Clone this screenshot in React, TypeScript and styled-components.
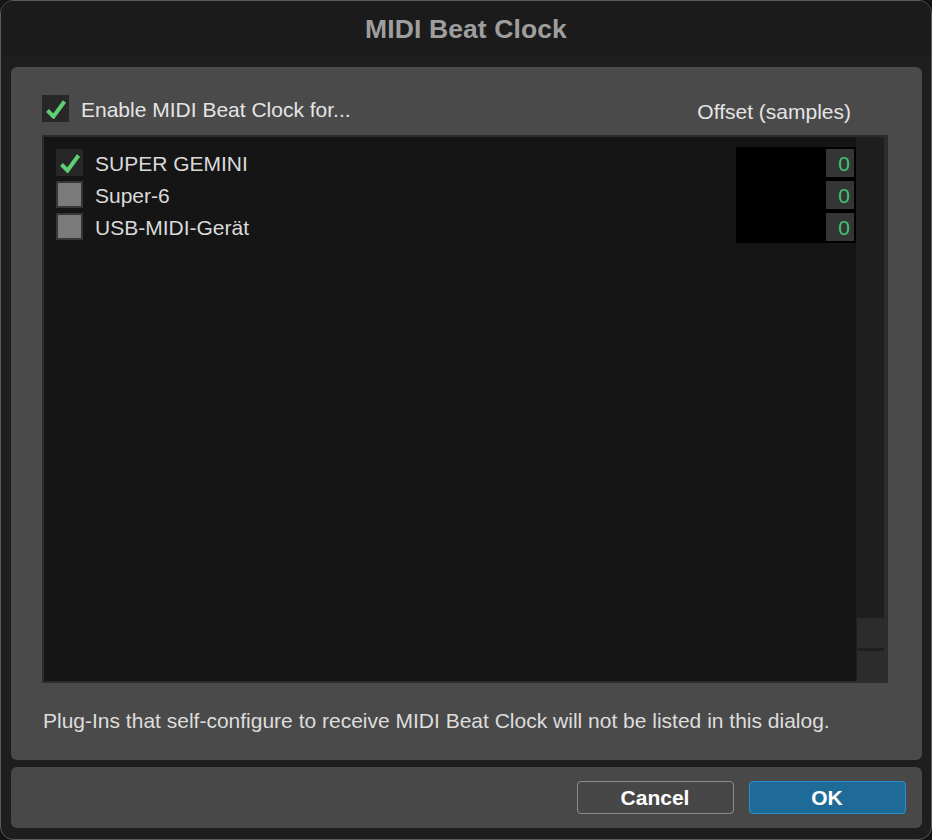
import React from "react";
import styled, { createGlobalStyle } from "styled-components";

const Global = createGlobalStyle`
  html, body { margin: 0; padding: 0; background: #161616; }
  body { font-family: "Liberation Sans", Arial, sans-serif; }
  * { box-sizing: border-box; }
`;

const Window = styled.div`
  width: 932px;
  height: 840px;
  background: #1e1e1e;
  border: 1.5px solid #5a5a5a;
  border-radius: 13px;
  box-shadow: 0 0 0 1px #0c0c0c;
  display: flex;
  flex-direction: column;
  overflow: hidden;
`;

const TitleBar = styled.div`
  height: 56px;
  flex: none;
  background: #1b1b1b;
  display: flex;
  align-items: center;
  justify-content: center;
`;

const Title = styled.h1`
  margin: 0;
  font-size: 26.5px;
  font-weight: 700;
  color: #9e9e9e;
  letter-spacing: 0.1px;
`;

const Body = styled.div`
  flex: 1;
  display: flex;
  flex-direction: column;
  gap: 7px;
  padding: 9.5px 9.5px 10px 9.5px;
`;

const Panel = styled.section`
  height: 693.5px;
  background: #4a4a4a;
  border-radius: 6px;
  padding: 28.5px 0 0 31.5px;
  display: flex;
  flex-direction: column;
`;

const HeaderRow = styled.div`
  width: 846px;
  height: 27px;
  display: flex;
  align-items: center;
`;

const HeaderLabel = styled.span`
  margin-left: 12px;
  padding-top: 2px;
  font-size: 21px;
  color: #e4e4e4;
  flex: 1;
`;

const OffsetLabel = styled.span`
  font-size: 21px;
  color: #e4e4e4;
  margin-right: 37px;
  margin-top: 7px;
`;

const CheckBox = styled.span<{ $checked?: boolean }>`
  width: 27px;
  height: 27px;
  flex: none;
  display: flex;
  align-items: center;
  justify-content: center;
  background: ${(p) => (p.$checked ? "#272727" : "#7a7a7a")};
  border: ${(p) => (p.$checked ? "none" : "2px solid #363636")};
`;

const ListBox = styled.div`
  margin-top: 13px;
  width: 846px;
  height: 548px;
  border: 2px solid #2c2c2c;
  background: #151515;
  display: grid;
  grid-template-columns: 1fr 120px 30px;
`;

const Names = styled.div`
  padding: 12px 0 0 12px;
  display: flex;
  flex-direction: column;
`;

const Row = styled.div`
  height: 32px;
  display: flex;
  align-items: flex-start;
  gap: 12px;
`;

const RowLabel = styled.span`
  font-size: 21px;
  line-height: 27px;
  padding-top: 1px;
  color: #dadada;
`;

const OffsetCol = styled.div`
  align-self: start;
  margin-top: 10px;
  background: #000;
  padding: 2px;
  display: flex;
  flex-direction: column;
  align-items: flex-end;
  gap: 4px;
`;

const OffsetCell = styled.span`
  width: 28px;
  height: 28px;
  background: #353535;
  color: #3ec870;
  font-size: 21px;
  line-height: 29px;
  text-align: right;
  padding-right: 4px;
`;

const ScrollTrack = styled.div`
  background: #1f1f1f;
  border-right: 2px solid #2e2e2e;
  display: flex;
  flex-direction: column;
  justify-content: flex-end;
  gap: 3px;
  padding: 0 0 0 1px;
`;

const ScrollButton = styled.div`
  height: 30px;
  background: #2c2c2c;
`;

const Note = styled.p`
  margin: 26px 0 0 1px;
  font-size: 21px;
  color: #dddddd;
`;

const Footer = styled.footer`
  height: 61px;
  background: #484848;
  border-radius: 6px;
  display: flex;
  align-items: center;
  justify-content: flex-end;
  gap: 15px;
  padding-right: 16px;
`;

const Button = styled.button<{ $primary?: boolean }>`
  width: 157px;
  height: 33px;
  border-radius: 4px;
  font-family: "Liberation Sans", Arial, sans-serif;
  font-size: 21px;
  font-weight: 700;
  color: #ffffff;
  background: ${(p) => (p.$primary ? "#1f6b98" : "#474747")};
  border: 1.5px solid ${(p) => (p.$primary ? "#2a8fd0" : "#8c8c8c")};
  padding: 0;
  display: flex;
  align-items: center;
  justify-content: center;
`;

const Check = () => (
  <svg width="22" height="20" viewBox="0 0 22 20">
    <path
      d="M2.5 11.5 L8.5 17.5 L19.5 2.5"
      fill="none"
      stroke="#5fcf73"
      strokeWidth="4"
      strokeLinecap="butt"
      strokeLinejoin="miter"
    />
  </svg>
);

const devices = [
  { name: "SUPER GEMINI", checked: true, offset: 0 },
  { name: "Super-6", checked: false, offset: 0 },
  { name: "USB-MIDI-Gerät", checked: false, offset: 0 },
];

export default function App() {
  return (
    <>
      <Global />
      <Window>
        <TitleBar>
          <Title>MIDI Beat Clock</Title>
        </TitleBar>
        <Body>
          <Panel>
            <HeaderRow>
              <CheckBox $checked>
                <Check />
              </CheckBox>
              <HeaderLabel>Enable MIDI Beat Clock for...</HeaderLabel>
              <OffsetLabel>Offset (samples)</OffsetLabel>
            </HeaderRow>
            <ListBox>
              <Names>
                {devices.map((d) => (
                  <Row key={d.name}>
                    <CheckBox $checked={d.checked}>{d.checked && <Check />}</CheckBox>
                    <RowLabel>{d.name}</RowLabel>
                  </Row>
                ))}
              </Names>
              <OffsetCol>
                {devices.map((d) => (
                  <OffsetCell key={d.name}>{d.offset}</OffsetCell>
                ))}
              </OffsetCol>
              <ScrollTrack>
                <ScrollButton />
                <ScrollButton />
              </ScrollTrack>
            </ListBox>
            <Note>Plug-Ins that self-configure to receive MIDI Beat Clock will not be listed in this dialog.</Note>
          </Panel>
          <Footer>
            <Button>Cancel</Button>
            <Button $primary>OK</Button>
          </Footer>
        </Body>
      </Window>
    </>
  );
}
